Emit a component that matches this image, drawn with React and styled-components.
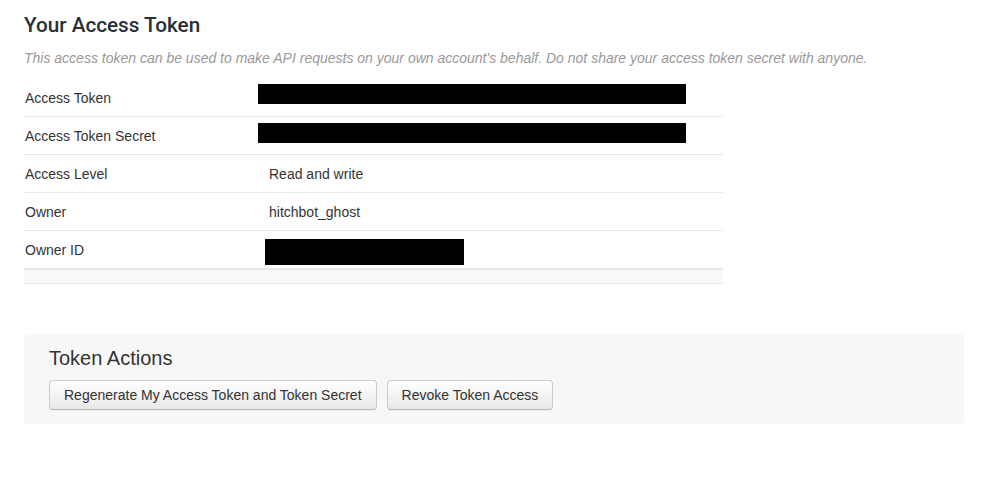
import React from 'react';
import styled, { createGlobalStyle } from 'styled-components';

const GlobalStyle = createGlobalStyle`
    body {
        margin: 0;
        background: #fff;
        font-family: "Liberation Sans", Arial, sans-serif;
        color: #333;
    }
`;

const Page = styled.div`
    padding: 0 41px 0 24px;
`;

const Title = styled.h2`
    margin: 13px 0 0;
    font-family: Roboto, "Liberation Sans", sans-serif;
    font-weight: 500;
    font-size: 20.7px;
    line-height: 24px;
    color: #292f33;
`;

const Intro = styled.p`
    margin: 12px 0 12px;
    font-size: 14px;
    line-height: 18px;
    font-style: italic;
    color: #999;
`;

const Table = styled.div`
    width: 699px;
`;

const Row = styled.div`
    display: flex;
    align-items: center;
    height: 37px;
    border-bottom: ${(p) => (p.last ? '2px' : '1px')} solid #e8e8e8;
    font-size: 14px;
    color: #333;
`;

const Label = styled.div`
    width: 244px;
    padding-left: 1px;
    flex-shrink: 0;
`;

const Value = styled.div`
    display: flex;
    align-self: stretch;
    align-items: center;
`;

const Redacted = styled.span`
    display: block;
    align-self: flex-start;
    background: #000;
    width: ${(p) => p.w}px;
    height: ${(p) => p.h}px;
    margin-top: ${(p) => p.top}px;
    margin-left: ${(p) => p.left}px;
`;

const TableFoot = styled.div`
    height: 13px;
    background: #f9f9f9;
    border-bottom: 1px solid #e8e8e8;
`;

const Panel = styled.section`
    margin-top: 50px;
    padding: 12px 25px 14px;
    background: #f7f7f7;
    border-radius: 4px;
`;

const PanelTitle = styled.h3`
    margin: 0 0 10px;
    font-size: 20px;
    line-height: 24px;
    font-weight: normal;
    color: #333;
`;

const Actions = styled.div`
    display: flex;
    gap: 10px;
`;

const Button = styled.button`
    height: 30px;
    padding: 0 14px;
    font-family: "Liberation Sans", Arial, sans-serif;
    font-size: 14px;
    color: #333;
    background: linear-gradient(#ffffff, #e8e8e8);
    border: 1px solid #cccccc;
    border-bottom-color: #b8b8b8;
    border-radius: 4px;
    box-shadow: inset 0 1px 0 rgba(255, 255, 255, 0.3), 0 1px 1px rgba(0, 0, 0, 0.05);
    cursor: pointer;
`;

const rows = [
    { label: 'Access Token', redact: { w: 428, h: 20, top: 5, left: -11 } },
    { label: 'Access Token Secret', redact: { w: 428, h: 20, top: 6, left: -11 } },
    { label: 'Access Level', text: 'Read and write' },
    { label: 'Owner', text: 'hitchbot_ghost' },
    { label: 'Owner ID', redact: { w: 199, h: 26, top: 8, left: -4 } },
];

export default function App() {
    return (
        <Page>
            <GlobalStyle />
            <Title>Your Access Token</Title>
            <Intro>
                This access token can be used to make API requests on your own account's behalf. Do not share your access token secret with anyone.
            </Intro>
            <Table>
                {rows.map((row, index) => (
                    <Row key={row.label} last={index === rows.length - 1}>
                        <Label>{row.label}</Label>
                        <Value>
                            {row.redact ? <Redacted {...row.redact} /> : row.text}
                        </Value>
                    </Row>
                ))}
                <TableFoot />
            </Table>
            <Panel>
                <PanelTitle>Token Actions</PanelTitle>
                <Actions>
                    <Button type="button">Regenerate My Access Token and Token Secret</Button>
                    <Button type="button">Revoke Token Access</Button>
                </Actions>
            </Panel>
        </Page>
    );
}
